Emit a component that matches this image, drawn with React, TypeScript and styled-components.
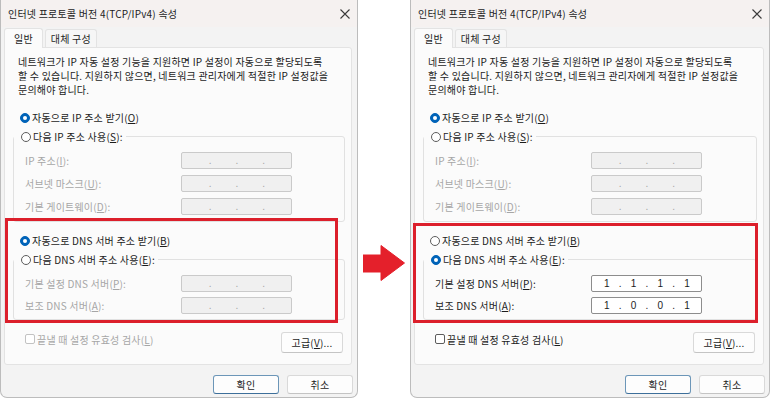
import React from "react";
import styled, {createGlobalStyle} from "styled-components";

const GlobalStyle = createGlobalStyle`
  html, body {
    margin: 0;
    padding: 0;
    background: #ffffff;
  }
  body {
    font-family: "Noto Sans CJK KR", "Noto Sans", sans-serif;
  }
`;

const Page = styled.div`
  display: flex;
  align-items: flex-start;
  width: 773px;
  height: 411px;
  overflow: hidden;
`;

const Dialog = styled.div<{$width: number}>`
  position: relative;
  flex: none;
  width: ${({$width}) => $width}px;
  height: 398px;
  box-sizing: border-box;
  display: flex;
  flex-direction: column;
  background: #f3f3f3;
  border: 1px solid #bcbcbc;
  border-top: none;
  border-radius: 0 0 7px 7px;
  font-size: 10px;
  letter-spacing: 0.2px;
  color: #1c1c1c;
`;

const TitleBar = styled.div`
  flex: none;
  height: 27px;
  display: flex;
  align-items: center;
  justify-content: space-between;
  padding: 0 7px 0 7px;
  background: #f5f1f0;
  font-size: 10px;

  svg {
    width: 10px;
    height: 10px;
  }
`;

const TabStrip = styled.div`
  flex: none;
  height: 20px;
  display: flex;
  align-items: flex-end;
  padding-left: 3px;
`;

const Tab = styled.div<{$active?: boolean}>`
  position: relative;
  z-index: 1;
  box-sizing: border-box;
  height: ${({$active}) => ($active ? 20 : 18)}px;
  display: flex;
  align-items: center;
  padding: 0 ${({$active}) => ($active ? 9 : 5)}px;
  margin-bottom: ${({$active}) => ($active ? -1 : 0)}px;
  margin-left: ${({$active}) => ($active ? 0 : 2)}px;
  background: ${({$active}) => ($active ? "#fbfbfb" : "#f6f6f6")};
  border: 1px solid #e3e3e3;
  border-bottom: none;
  border-radius: 3px 3px 0 0;
`;

const Panel = styled.div`
  flex: none;
  height: 318px;
  box-sizing: border-box;
  margin: 0 5px 0 3px;
  padding: 7px 6px 0 8px;
  display: flex;
  flex-direction: column;
  background: #fbfbfb;
  border: 1px solid #e3e3e3;
  border-radius: 0 3px 3px 3px;
`;

const Description = styled.div`
  margin: 0 0 0 5px;
`;

const DescLine = styled.div`
  height: 14px;
  line-height: 14px;
  white-space: nowrap;
`;

const RadioRow = styled.label<{$gap?: number}>`
  display: flex;
  align-items: center;
  height: 19px;
  padding-left: 7px;
  margin-top: ${({$gap}) => $gap ?? 0}px;
`;

const RadioDot = styled.span<{$checked?: boolean}>`
  position: relative;
  flex: none;
  width: 10px;
  height: 10px;
  box-sizing: border-box;
  margin-right: 2px;
  border-radius: 50%;
  background: ${({$checked}) => ($checked ? "#0063b8" : "#ffffff")};
  border: 1px solid ${({$checked}) => ($checked ? "#0063b8" : "#5c5c5c")};

  &::after {
    content: "";
    display: ${({$checked}) => ($checked ? "block" : "none")};
    position: absolute;
    left: 2px;
    top: 2px;
    width: 4px;
    height: 4px;
    border-radius: 50%;
    background: #ffffff;
  }
`;

const GroupBox = styled.fieldset`
  margin: 0;
  padding: 3px 0 3px 11px;
  border: 1px solid #e1e1e1;
  border-radius: 3px;
`;

const Legend = styled.legend`
  margin-left: -11px;
  padding: 0 3px 0 0;
  background: #fbfbfb;

  ${RadioRow} {
    padding-left: 7px;
  }
`;

const FieldRow = styled.div<{$height: number; $disabled?: boolean}>`
  display: flex;
  align-items: center;
  height: ${({$height}) => $height}px;
  color: ${({$disabled}) => ($disabled ? "#a6a6a6" : "#1c1c1c")};
`;

const FieldLabel = styled.span`
  flex: none;
  width: 156px;
`;

const IpBox = styled.div<{$disabled?: boolean}>`
  flex: none;
  width: 111px;
  height: 17px;
  box-sizing: border-box;
  display: flex;
  align-items: center;
  padding: 0 3px 0 4px;
  border: 1px solid ${({$disabled}) => ($disabled ? "#cacaca" : "#8d8d8d")};
  border-radius: 2px;
  background: ${({$disabled}) => ($disabled ? "#f0f0f0" : "#ffffff")};
  color: ${({$disabled}) => ($disabled ? "#a6a6a6" : "#1c1c1c")};
  font-family: "Liberation Sans", "Noto Sans", sans-serif;
  font-size: 10px;
  letter-spacing: 0;
`;

const Octet = styled.span`
  width: 22px;
  text-align: center;
`;

const OctetDot = styled.span`
  width: 5px;
  text-align: center;
`;

const BottomRow = styled.div`
  display: flex;
  justify-content: space-between;
  align-items: flex-start;
  margin: 12px 2px 0 0;
`;

const CheckRow = styled.label<{$disabled?: boolean}>`
  display: flex;
  align-items: center;
  height: 14px;
  padding-left: 12px;
  color: ${({$disabled}) => ($disabled ? "#a6a6a6" : "#1c1c1c")};
`;

const CheckBox = styled.span<{$disabled?: boolean}>`
  flex: none;
  width: 10px;
  height: 10px;
  box-sizing: border-box;
  margin-right: 2px;
  border: 1px solid ${({$disabled}) => ($disabled ? "#c2c2c2" : "#5c5c5c")};
  border-radius: 2px;
  background: #ffffff;
`;

const Button = styled.div<{$primary?: boolean; $width: number; $height: number}>`
  box-sizing: border-box;
  width: ${({$width}) => $width}px;
  height: ${({$height}) => $height}px;
  display: flex;
  align-items: center;
  justify-content: center;
  background: #fdfdfd;
  border: 1px solid ${({$primary}) => ($primary ? "#6c96b8" : "#d9d9d9")};
  border-bottom-color: ${({$primary}) => ($primary ? "#3d6f9a" : "#c4c4c4")};
  border-radius: 3px;
  color: #1c1c1c;
`;

const Footer = styled.div`
  display: flex;
  justify-content: flex-end;
  gap: 8px;
  padding: 10px 4px 0 0;
`;

const Highlight = styled.div<{$left: number; $top: number; $width: number; $height: number}>`
  position: absolute;
  left: ${({$left}) => $left}px;
  top: ${({$top}) => $top}px;
  width: ${({$width}) => $width}px;
  height: ${({$height}) => $height}px;
  box-sizing: border-box;
  border: 3px solid #dc1f2b;
  pointer-events: none;
`;

const ArrowZone = styled.div`
  flex: none;
  width: 52px;
  display: flex;
  justify-content: center;
  padding-top: 245px;

  svg {
    width: 42px;
    height: 36px;
  }
`;

const CloseIcon = () => (
    <svg viewBox="0 0 10 10">
        <path d="M0.5 0.5 L9.5 9.5 M9.5 0.5 L0.5 9.5" stroke="#3a3a3a" strokeWidth="1.1" fill="none"/>
    </svg>
);

const IpInput: React.FC<{value?: string[]; disabled?: boolean}> = ({value, disabled}) => {
    const parts = value ?? ["", "", "", ""];
    return (
        <IpBox $disabled={disabled}>
            {parts.map((p, i) => (
                <React.Fragment key={i}>
                    {i > 0 && <OctetDot>.</OctetDot>}
                    <Octet>{p}</Octet>
                </React.Fragment>
            ))}
        </IpBox>
    );
};

interface highlightBox {
    left: number
    top: number
    width: number
    height: number
}

interface dialogProps {
    width: number
    manualDns: boolean
    highlight: highlightBox
}

const PropertiesDialog: React.FC<dialogProps> = ({width, manualDns, highlight}) => {
    return (
        <Dialog $width={width}>
            <TitleBar>
                <span>인터넷 프로토콜 버전 4(TCP/IPv4) 속성</span>
                <CloseIcon/>
            </TitleBar>
            <TabStrip>
                <Tab $active>일반</Tab>
                <Tab>대체 구성</Tab>
            </TabStrip>
            <Panel>
                <Description>
                    <DescLine>네트워크가 IP 자동 설정 기능을 지원하면 IP 설정이 자동으로 할당되도록</DescLine>
                    <DescLine>할 수 있습니다. 지원하지 않으면, 네트워크 관리자에게 적절한 IP 설정값을</DescLine>
                    <DescLine>문의해야 합니다.</DescLine>
                </Description>

                <RadioRow $gap={11}>
                    <RadioDot $checked/>
                    <span>자동으로 IP 주소 받기(<u>O</u>)</span>
                </RadioRow>
                <GroupBox>
                    <Legend>
                        <RadioRow>
                            <RadioDot/>
                            <span>다음 IP 주소 사용(<u>S</u>):</span>
                        </RadioRow>
                    </Legend>
                    <FieldRow $height={23} $disabled>
                        <FieldLabel>IP 주소(<u>I</u>):</FieldLabel>
                        <IpInput disabled/>
                    </FieldRow>
                    <FieldRow $height={23} $disabled>
                        <FieldLabel>서브넷 마스크(<u>U</u>):</FieldLabel>
                        <IpInput disabled/>
                    </FieldRow>
                    <FieldRow $height={23} $disabled>
                        <FieldLabel>기본 게이트웨이(<u>D</u>):</FieldLabel>
                        <IpInput disabled/>
                    </FieldRow>
                </GroupBox>

                <RadioRow $gap={9}>
                    <RadioDot $checked={!manualDns}/>
                    <span>자동으로 DNS 서버 주소 받기(<u>B</u>)</span>
                </RadioRow>
                <GroupBox>
                    <Legend>
                        <RadioRow>
                            <RadioDot $checked={manualDns}/>
                            <span>다음 DNS 서버 주소 사용(<u>E</u>):</span>
                        </RadioRow>
                    </Legend>
                    <FieldRow $height={22} $disabled={!manualDns}>
                        <FieldLabel>기본 설정 DNS 서버(<u>P</u>):</FieldLabel>
                        <IpInput disabled={!manualDns} value={manualDns ? ["1", "1", "1", "1"] : undefined}/>
                    </FieldRow>
                    <FieldRow $height={22} $disabled={!manualDns}>
                        <FieldLabel>보조 DNS 서버(<u>A</u>):</FieldLabel>
                        <IpInput disabled={!manualDns} value={manualDns ? ["1", "0", "0", "1"] : undefined}/>
                    </FieldRow>
                </GroupBox>

                <BottomRow>
                    <CheckRow $disabled={!manualDns}>
                        <CheckBox $disabled={!manualDns}/>
                        <span>끝낼 때 설정 유효성 검사(<u>L</u>)</span>
                    </CheckRow>
                    <Button $width={62} $height={21}>고급(<u>V</u>)...</Button>
                </BottomRow>
            </Panel>
            <Footer>
                <Button $primary $width={66} $height={19}>확인</Button>
                <Button $width={66} $height={19}>취소</Button>
            </Footer>
            <Highlight
                $left={highlight.left}
                $top={highlight.top}
                $width={highlight.width}
                $height={highlight.height}
            />
        </Dialog>
    );
};

const Arrow = () => (
    <svg viewBox="0 0 42 36">
        <path d="M0 10 H18 V0.5 L41.5 18 L18 35.5 V27 H0 Z" fill="#e4202b" stroke="#e4202b" strokeWidth="1" strokeLinejoin="round"/>
    </svg>
);

export default function App() {
    return (
        <>
            <GlobalStyle/>
            <Page>
                <PropertiesDialog
                    width={358}
                    manualDns={false}
                    highlight={{left: 4, top: 218, width: 333, height: 105}}
                />
                <ArrowZone>
                    <Arrow/>
                </ArrowZone>
                <PropertiesDialog
                    width={360}
                    manualDns
                    highlight={{left: 2, top: 223, width: 345, height: 100}}
                />
            </Page>
        </>
    );
}
